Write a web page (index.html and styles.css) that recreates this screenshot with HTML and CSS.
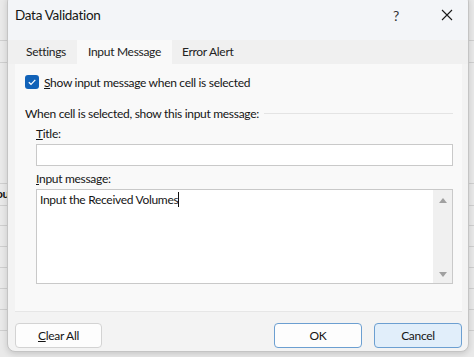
FILE: index.html
```html
<!DOCTYPE html>
<html lang="en">
<head>
  <meta charset="UTF-8">
  <title>Data Validation</title>
  <link rel="stylesheet" href="styles.css">
</head>
<body>

<div class="sheet">
  <div class="cell-text">ou</div>
</div>

<div class="dialog">
  <div class="titlebar">
    <span class="title">Data Validation</span>
    <span class="help">?</span>
    <span class="close">
      <svg width="12" height="12" viewBox="0 0 12 12"><path d="M1 1 L11 11 M11 1 L1 11" stroke="#1a1a1a" stroke-width="1.1" fill="none"/></svg>
    </span>
  </div>

  <div class="tabs">
    <div class="tab">Settings</div>
    <div class="tab active">Input Message</div>
    <div class="tab">Error Alert</div>
  </div>

  <div class="panel">
    <label class="check">
      <span class="box">
        <svg width="10" height="10" viewBox="0 0 10 10"><path d="M1.8 5.2 L4 7.3 L8.3 2.8" stroke="#fff" stroke-width="1.2" fill="none"/></svg>
      </span>
      <span><u>S</u>how input message when cell is selected</span>
    </label>

    <div class="group">
      <span>When cell is selected, show this input message:</span>
      <span class="rule"></span>
    </div>

    <div class="field">
      <div class="label"><u>T</u>itle:</div>
      <div class="input"></div>
    </div>

    <div class="field">
      <div class="label"><u>I</u>nput message:</div>
      <div class="textarea">
        <div class="text">Input the Received Volumes<span class="caret"></span></div>
        <div class="scroll">
          <span class="arrow up"></span>
          <span class="arrow down"></span>
        </div>
      </div>
    </div>
  </div>

  <div class="footer">
    <button class="btn"><u>C</u>lear All</button>
    <span class="spacer"></span>
    <button class="btn primary">OK</button>
    <button class="btn primary focus">Cancel</button>
  </div>
</div>

</body>
</html>
```

FILE: styles.css
```css
* {
  box-sizing: border-box;
  margin: 0;
  padding: 0;
}

body {
  font-family: Lato, 'Noto Sans', sans-serif;
  font-size: 12px;
  letter-spacing: -0.3px;
  color: #151515;
  width: 474px;
  height: 357px;
  overflow: hidden;
  position: relative;
  background: #e6e6e6;
}

/* spreadsheet behind the dialog */
.sheet {
  width: 474px;
  height: 357px;
  background:
    linear-gradient(#cfcfcf, #cfcfcf) 0 40px / 100% 1px no-repeat,
    linear-gradient(#cfcfcf, #cfcfcf) 0 62px / 100% 1px no-repeat,
    linear-gradient(#cfcfcf, #cfcfcf) 0 183px / 100% 1px no-repeat,
    linear-gradient(#cfcfcf, #cfcfcf) 0 205px / 100% 1px no-repeat,
    linear-gradient(#cfcfcf, #cfcfcf) 0 225px / 100% 1px no-repeat,
    linear-gradient(#cfcfcf, #cfcfcf) 0 246px / 100% 1px no-repeat,
    linear-gradient(#cfcfcf, #cfcfcf) 0 267px / 100% 1px no-repeat,
    linear-gradient(#cfcfcf, #cfcfcf) 0 288px / 100% 1px no-repeat,
    linear-gradient(#cfcfcf, #cfcfcf) 0 309px / 100% 1px no-repeat,
    linear-gradient(#cfcfcf, #cfcfcf) 0 330px / 100% 1px no-repeat,
    #e9e9e9;
}

.cell-text {
  padding-top: 186px;
  margin-left: -4px;
  font-weight: bold;
  font-size: 12px;
}

.dialog {
  position: absolute;
  left: 7px;
  top: -6px;
  width: 462px;
  height: 358px;
  background: #f3f3f3;
  border: 1px solid #c4c4c4;
  border-radius: 8px;
  box-shadow: 0 2px 6px rgba(0, 0, 0, 0.15);
  display: flex;
  flex-direction: column;
}

.titlebar {
  height: 45px;
  padding: 0 0 5px 7px;
  display: flex;
  align-items: center;
  background: #f3f5f8;
  border-radius: 8px 8px 0 0;
}

.title {
  font-size: 13.5px;
  flex: 1;
}

.help {
  font-size: 14px;
  width: 20px;
  text-align: center;
  margin-right: 31px;
  color: #333;
}

.close {
  width: 20px;
  margin-right: 11px;
  display: flex;
  justify-content: center;
}

.tabs {
  display: flex;
  height: 24px;
  padding-left: 8px;
  background: #f0f0f0;
}

.tab {
  padding: 0 11px 0 10px;
  line-height: 24px;
  color: #222;
}

.tab.active {
  background: #f9f9f9;
  padding: 0 11px;
}

.panel {
  margin: 0 6px 0 7px;
  height: 248px;
  background: #f9f9f9;
  border-bottom: 1px solid #e6e6e6;
  padding: 11px 9px 0 10px;
}

.check {
  display: flex;
  align-items: center;
  gap: 5px;
  height: 14px;
}

.box {
  width: 14px;
  height: 14px;
  border-radius: 3px;
  background: #1162b8;
  display: flex;
  align-items: center;
  justify-content: center;
}

.group {
  display: flex;
  align-items: center;
  gap: 5px;
  margin-top: 16px;
  height: 16px;
}

.rule {
  flex: 1;
  height: 1px;
  background: #e4e4e4;
}

.field {
  padding-left: 11px;
}

.field .label {
  line-height: 16px;
  margin-top: 5px;
  margin-bottom: 2px;
}

.field:nth-of-type(1) .label {
  margin-top: 10px;
}

.input {
  height: 22px;
  background: #fff;
  border: 1px solid #c9c9c9;
}

.textarea {
  height: 95px;
  background: #fff;
  border: 1px solid #c9c9c9;
  display: flex;
}

.text {
  flex: 1;
  padding: 2px 0 0 3px;
}

.caret {
  display: inline-block;
  width: 1px;
  height: 15px;
  background: #111;
  vertical-align: -3px;
}

.scroll {
  width: 19px;
  background: #f0f0f0;
  display: flex;
  flex-direction: column;
  justify-content: space-between;
  align-items: center;
  padding: 8px 0 6px;
}

.arrow {
  width: 0;
  height: 0;
  border-left: 4px solid transparent;
  border-right: 4px solid transparent;
}

.arrow.up {
  border-bottom: 5px solid #a0a0a0;
}

.arrow.down {
  border-top: 5px solid #a0a0a0;
}

.footer {
  display: flex;
  gap: 12px;
  padding: 11px 6px 0 7px;
}

.spacer {
  flex: 1;
}

.btn {
  font-family: Lato, 'Noto Sans', sans-serif;
  font-size: 12px;
  letter-spacing: -0.3px;
  color: #151515;
  width: 88px;
  height: 25px;
  background: #fdfdfd;
  border: 1px solid #d3d3d3;
  border-radius: 4px;
}

.btn:first-child {
  width: 87px;
}

.btn.primary {
  border-color: #6c9fd1;
}

.btn.focus {
  background: #e1eefa;
}
```
